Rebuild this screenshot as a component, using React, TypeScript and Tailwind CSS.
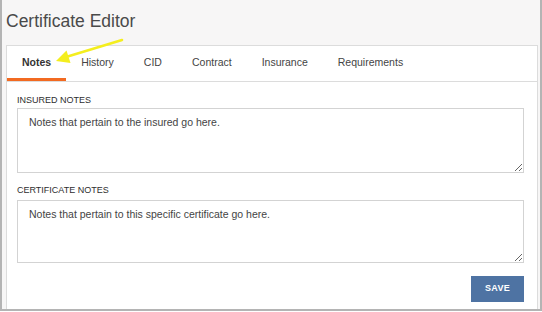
import React from "react";

const tabs = ["Notes", "History", "CID", "Contract", "Insurance", "Requirements"];

export default function App() {
  return (
    <div
      className="relative w-[542px] h-[312px] overflow-hidden bg-white"
      style={{ fontFamily: '"Liberation Sans", Arial, sans-serif' }}
    >
      <div className="flex flex-col w-[542px] h-[311px] bg-[#f7f6f6] border-l-[2px] border-r-[2px] border-b-[2px] border-[#b4b4b4]">
        <div className="h-[45px] shrink-0 pl-[4px] pt-[12px]">
          <h1 className="text-[17.5px] leading-[18px] text-[#4a4a4a] font-normal">Certificate Editor</h1>
        </div>
        <div className="flex-1 ml-[4px] mr-[2px] bg-white border-l border-t border-r border-[#dcdcdc] flex flex-col">
          <div className="flex h-[36px] border-b border-[#dcdcdc] shrink-0">
            {tabs.map((t, i) => (
              <div
                key={t}
                className={
                  i === 0
                    ? "h-[35px] px-[15px] pt-[2px] flex items-center border-b-[3px] border-[#f26a21] text-[10.5px] font-bold text-[#333]"
                    : "h-[35px] px-[15px] pt-[2px] flex items-center border-b-[3px] border-transparent text-[10.5px] text-[#444]"
                }
              >
                {t}
              </div>
            ))}
          </div>
          <div className="flex flex-col pl-[10px] pr-[13px] pt-[12px]">
            <label className="text-[9px] leading-[12px] text-[#2e2e2e] mb-[2px]">INSURED NOTES</label>
            <textarea
              readOnly
              defaultValue="Notes that pertain to the insured go here."
              className="w-full h-[65px] border border-[#d3d3d3] px-[11px] pt-[5px] text-[10.5px] leading-[16px] text-[#444] outline-none resize-y"
              style={{ fontFamily: '"Liberation Sans", Arial, sans-serif' }}
            />
            <label className="text-[9px] leading-[12px] text-[#2e2e2e] mt-[11px] mb-[4px]">CERTIFICATE NOTES</label>
            <textarea
              readOnly
              defaultValue="Notes that pertain to this specific certificate go here."
              className="w-full h-[63px] border border-[#d3d3d3] px-[11px] pt-[5px] text-[10.5px] leading-[16px] text-[#444] outline-none resize-y"
              style={{ fontFamily: '"Liberation Sans", Arial, sans-serif' }}
            />
            <div className="flex justify-end mt-[13px]">
              <button className="w-[53px] h-[26px] bg-[#4e73a3] text-white text-[9px] font-bold tracking-[0.3px]">
                SAVE
              </button>
            </div>
          </div>
        </div>
      </div>
      <svg
        className="absolute left-0 top-0 pointer-events-none"
        width="542"
        height="312"
        viewBox="0 0 542 312"
      >
        <line x1="122" y1="40" x2="66" y2="57" stroke="#f4ee1e" strokeWidth="2.6" strokeLinecap="round" />
        <polygon points="56,61 66.5,50.5 70.5,63" fill="#f4ee1e" />
      </svg>
    </div>
  );
}
